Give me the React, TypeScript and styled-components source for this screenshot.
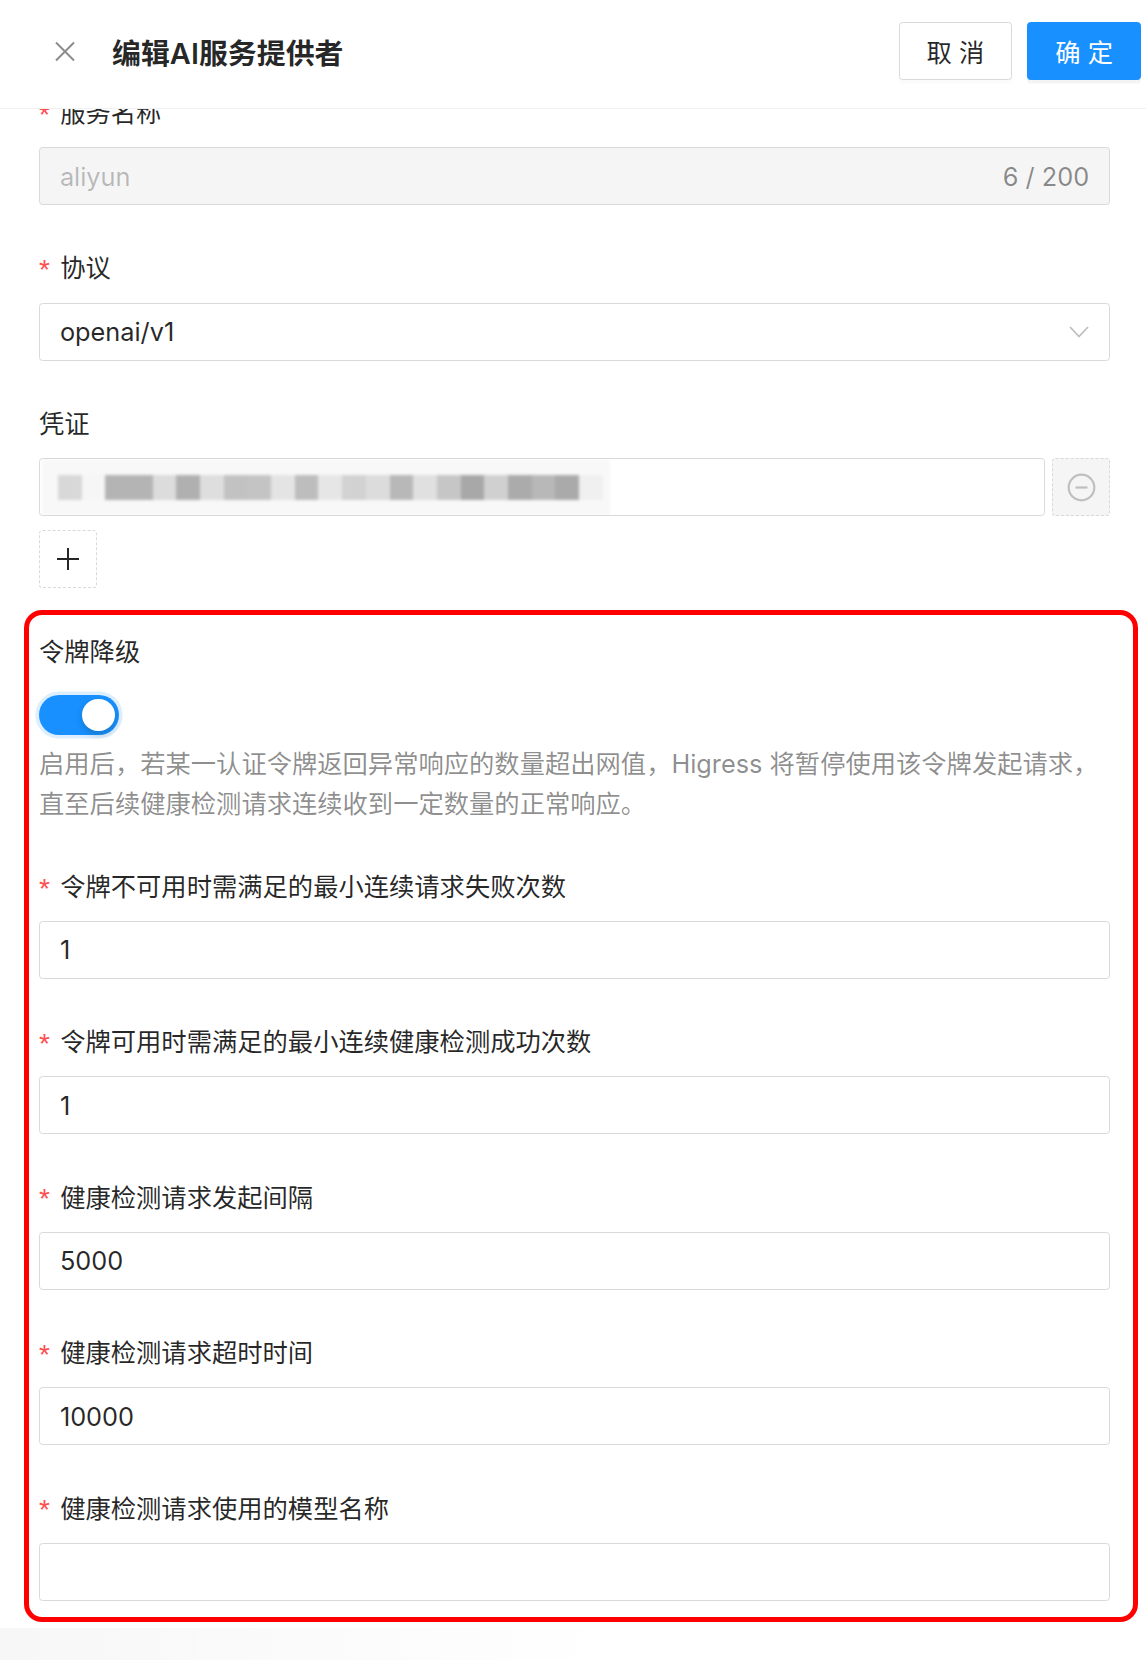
import React from "react";
import styled, { createGlobalStyle } from "styled-components";

// the screenshot is an antd drawer at ~1.8x, so every antd size goes through u()
const S = 1.808;
const u = (n: number) => `${(n * S).toFixed(2)}px`;

const BLUE = "#1890ff";
const BORDER = "#d9d9d9";

const GlobalStyle = createGlobalStyle`
  html, body {
    margin: 0;
    padding: 0;
    background: #fff;
  }
  body {
    font-family: "Inter", "Noto Sans CJK SC", sans-serif;
    color: rgba(0, 0, 0, 0.85);
  }
`;

const Page = styled.div`
  width: 1146px;
  height: 1660px;
  display: flex;
  flex-direction: column;
  overflow: hidden;
  background: #fff;
`;

const Header = styled.header`
  flex-shrink: 0;
  height: 109px;
  box-sizing: border-box;
  display: flex;
  align-items: center;
  padding: 0 5px 6px 55px;
  border-bottom: 1.8px solid #f0f0f0;
  background: #fff;
`;

const CloseIcon = styled.svg`
  width: 20px;
  height: 21px;
  margin-right: 37px;
  flex-shrink: 0;
`;

const Title = styled.h1`
  flex: 1;
  margin: 0;
  font-size: ${u(16)};
  font-weight: 600;
  color: rgba(0, 0, 0, 0.85);
`;

const Actions = styled.div`
  display: flex;
  gap: 15px;
`;

const Button = styled.button<{ $primary?: boolean }>`
  height: ${u(32)};
  padding: 0 27px;
  box-sizing: border-box;
  font-family: inherit;
  font-size: ${u(14)};
  border-radius: ${u(2)};
  border: 1.8px solid ${(p) => (p.$primary ? BLUE : BORDER)};
  background: ${(p) => (p.$primary ? BLUE : "#fff")};
  color: ${(p) => (p.$primary ? "#fff" : "rgba(0, 0, 0, 0.85)")};
  box-shadow: 0 ${u(2)} 0 rgba(0, 0, 0, ${(p) => (p.$primary ? 0.045 : 0.015)});
`;

const Body = styled.main`
  flex: 1;
  display: flex;
  flex-direction: column;
  overflow: hidden;
`;

const Form = styled.div`
  flex-shrink: 0;
  display: flex;
  flex-direction: column;
  padding: 0 36px 0 39px;
  margin-top: -16px;
`;

const Item = styled.div<{ $last?: boolean; $tight?: boolean }>`
  display: flex;
  flex-direction: column;
  margin-bottom: ${(p) => (p.$last || p.$tight ? "0" : u(24))};
`;

const Label = styled.label`
  display: flex;
  align-items: center;
  height: ${u(22)};
  padding-bottom: ${u(8)};
  font-size: ${u(14)};
  line-height: ${u(22)};
  color: rgba(0, 0, 0, 0.85);
`;

const Star = styled.span`
  display: inline-block;
  width: ${u(7)};
  margin-right: 8.5px;
  margin-top: 4px;
  color: #ff4d4f;
  font-family: "Liberation Sans", sans-serif;
  font-size: 28px;
  line-height: 1;
`;

const Field = styled.div<{ $disabled?: boolean }>`
  flex: none;
  display: flex;
  align-items: center;
  height: ${u(32)};
  box-sizing: border-box;
  padding: 0 ${u(11)};
  border: 1.8px solid ${BORDER};
  border-radius: ${u(2)};
  background: ${(p) => (p.$disabled ? "#f5f5f5" : "#fff")};
  font-size: ${u(14)};
  color: ${(p) => (p.$disabled ? "rgba(0, 0, 0, 0.25)" : "rgba(0, 0, 0, 0.85)")};
  overflow: hidden;
`;

const Value = styled.span`
  flex: 1;
  white-space: nowrap;
`;

const Count = styled.span`
  color: rgba(0, 0, 0, 0.45);
`;

const Row = styled.div`
  display: flex;
  gap: 7px;

  & > ${Field} {
    flex: 1;
  }
`;

const Masked = styled.div`
  align-self: stretch;
  width: 568px;
  margin-left: -18px;
  padding-left: 16px;
  box-sizing: border-box;
  display: flex;
  align-items: center;
  background: #f8f8f8;
  filter: blur(1.4px);
`;

const Cell = styled.span<{ $shade: string }>`
  width: 23.7px;
  height: 25px;
  background: ${(p) => p.$shade};
`;

const IconButton = styled.div<{ $muted?: boolean }>`
  width: ${u(32)};
  height: ${u(32)};
  box-sizing: border-box;
  flex-shrink: 0;
  display: flex;
  align-items: center;
  justify-content: center;
  border: 1.8px dashed ${BORDER};
  border-radius: ${u(2)};
  background: ${(p) => (p.$muted ? "#f5f5f5" : "#fff")};
`;

const AddRow = styled.div`
  margin-top: ${u(8)};
`;

const Highlight = styled.section`
  display: flex;
  flex-direction: column;
  margin: 21.6px -28px 0 -15px;
  padding: 16.8px 23px 16.4px 10px;
  border: 5px solid #ff0000;
  border-radius: 18px;
`;

const SwitchLine = styled.div`
  height: ${u(32)};
  display: flex;
  align-items: center;
`;

const Switch = styled.div<{ $on: boolean }>`
  position: relative;
  width: ${u(44)};
  height: ${u(22)};
  border-radius: 100px;
  background: ${(p) => (p.$on ? BLUE : "rgba(0,0,0,0.25)")};
  box-shadow: 0 0 0 ${u(2)} rgba(24, 144, 255, 0.15);
`;

const Handle = styled.span<{ $on: boolean }>`
  position: absolute;
  top: ${u(2)};
  left: ${(p) => (p.$on ? `calc(100% - ${u(20)})` : u(2))};
  width: ${u(18)};
  height: ${u(18)};
  border-radius: 50%;
  background: #fff;
  box-shadow: 0 ${u(2)} ${u(4)} rgba(0, 35, 11, 0.2);
`;

const Extra = styled.div`
  font-size: ${u(14)};
  line-height: ${u(22)};
  color: rgba(0, 0, 0, 0.45);
  white-space: nowrap;
`;

const BottomShade = styled.div`
  flex: 1;
  margin-top: 6px;
  background: linear-gradient(90deg, rgba(0, 0, 0, 0.03), rgba(0, 0, 0, 0) 55%);
`;

const maskShades = [
  "#d8d8d8", "#f6f6f6", "#b4b4b4", "#b4b4b4", "#dcdcdc", "#b0b0b0", "#dedede", "#c2c2c2",
  "#c4c4c4", "#e4e4e4", "#bdbdbd", "#e6e6e6", "#d2d2d2", "#dcdcdc", "#b8b8b8", "#e0e0e0",
  "#c6c6c6", "#a8a8a8", "#d0d0d0", "#ababab", "#b8b8b8", "#aaaaaa", "#f0f0f0",
];

const healthFields = [
  { label: "令牌不可用时需满足的最小连续请求失败次数", value: "1" },
  { label: "令牌可用时需满足的最小连续健康检测成功次数", value: "1" },
  { label: "健康检测请求发起间隔", value: "5000" },
  { label: "健康检测请求超时时间", value: "10000" },
  { label: "健康检测请求使用的模型名称", value: "" },
];

const App: React.FC = () => {
  const fallbackOn = true;

  return (
    <Page>
      <GlobalStyle />
      <Header>
        <CloseIcon viewBox="0 0 20 21" fill="none" stroke="#8c8c8c" strokeWidth="2">
          <path d="M1 1.5 L19 19.5 M19 1.5 L1 19.5" />
        </CloseIcon>
        <Title>编辑AI服务提供者</Title>
        <Actions>
          <Button>取 消</Button>
          <Button $primary>确 定</Button>
        </Actions>
      </Header>

      <Body>
        <Form>
          <Item>
            <Label>
              <Star>*</Star>服务名称
            </Label>
            <Field $disabled>
              <Value>aliyun</Value>
              <Count>6 / 200</Count>
            </Field>
          </Item>

          <Item>
            <Label>
              <Star>*</Star>协议
            </Label>
            <Field>
              <Value>openai/v1</Value>
              <svg width="20" height="12" viewBox="0 0 20 12" fill="none" stroke="#bfbfbf" strokeWidth="1.8">
                <path d="M1 1 L10 10.5 L19 1" />
              </svg>
            </Field>
          </Item>

          <Item $tight>
            <Label>凭证</Label>
            <Row>
              <Field>
                <Masked>
                  {maskShades.map((shade, i) => (
                    <Cell key={i} $shade={shade} />
                  ))}
                </Masked>
              </Field>
              <IconButton $muted>
                <svg width="29" height="29" viewBox="0 0 29 29" fill="none" stroke="#bfbfbf" strokeWidth="2.2">
                  <circle cx="14.5" cy="14.5" r="12.8" />
                  <path d="M8.5 14.5 H20.5" />
                </svg>
              </IconButton>
            </Row>
            <AddRow>
              <IconButton>
                <svg width="24" height="24" viewBox="0 0 24 24" fill="none" stroke="rgba(0,0,0,0.85)" strokeWidth="2">
                  <path d="M12 1 V23 M1 12 H23" />
                </svg>
              </IconButton>
            </AddRow>
          </Item>

          <Highlight>
            <Item>
              <Label>令牌降级</Label>
              <SwitchLine>
                <Switch $on={fallbackOn}>
                  <Handle $on={fallbackOn} />
                </Switch>
              </SwitchLine>
              <Extra>
                启用后，若某一认证令牌返回异常响应的数量超出网值，Higress 将暂停使用该令牌发起请求，
                <br />
                直至后续健康检测请求连续收到一定数量的正常响应。
              </Extra>
            </Item>

            {healthFields.map((f, i) => (
              <Item key={f.label} $last={i === healthFields.length - 1}>
                <Label>
                  <Star>*</Star>
                  {f.label}
                </Label>
                <Field>
                  <Value>{f.value}</Value>
                </Field>
              </Item>
            ))}
          </Highlight>
        </Form>
        <BottomShade />
      </Body>
    </Page>
  );
};

export default App;
